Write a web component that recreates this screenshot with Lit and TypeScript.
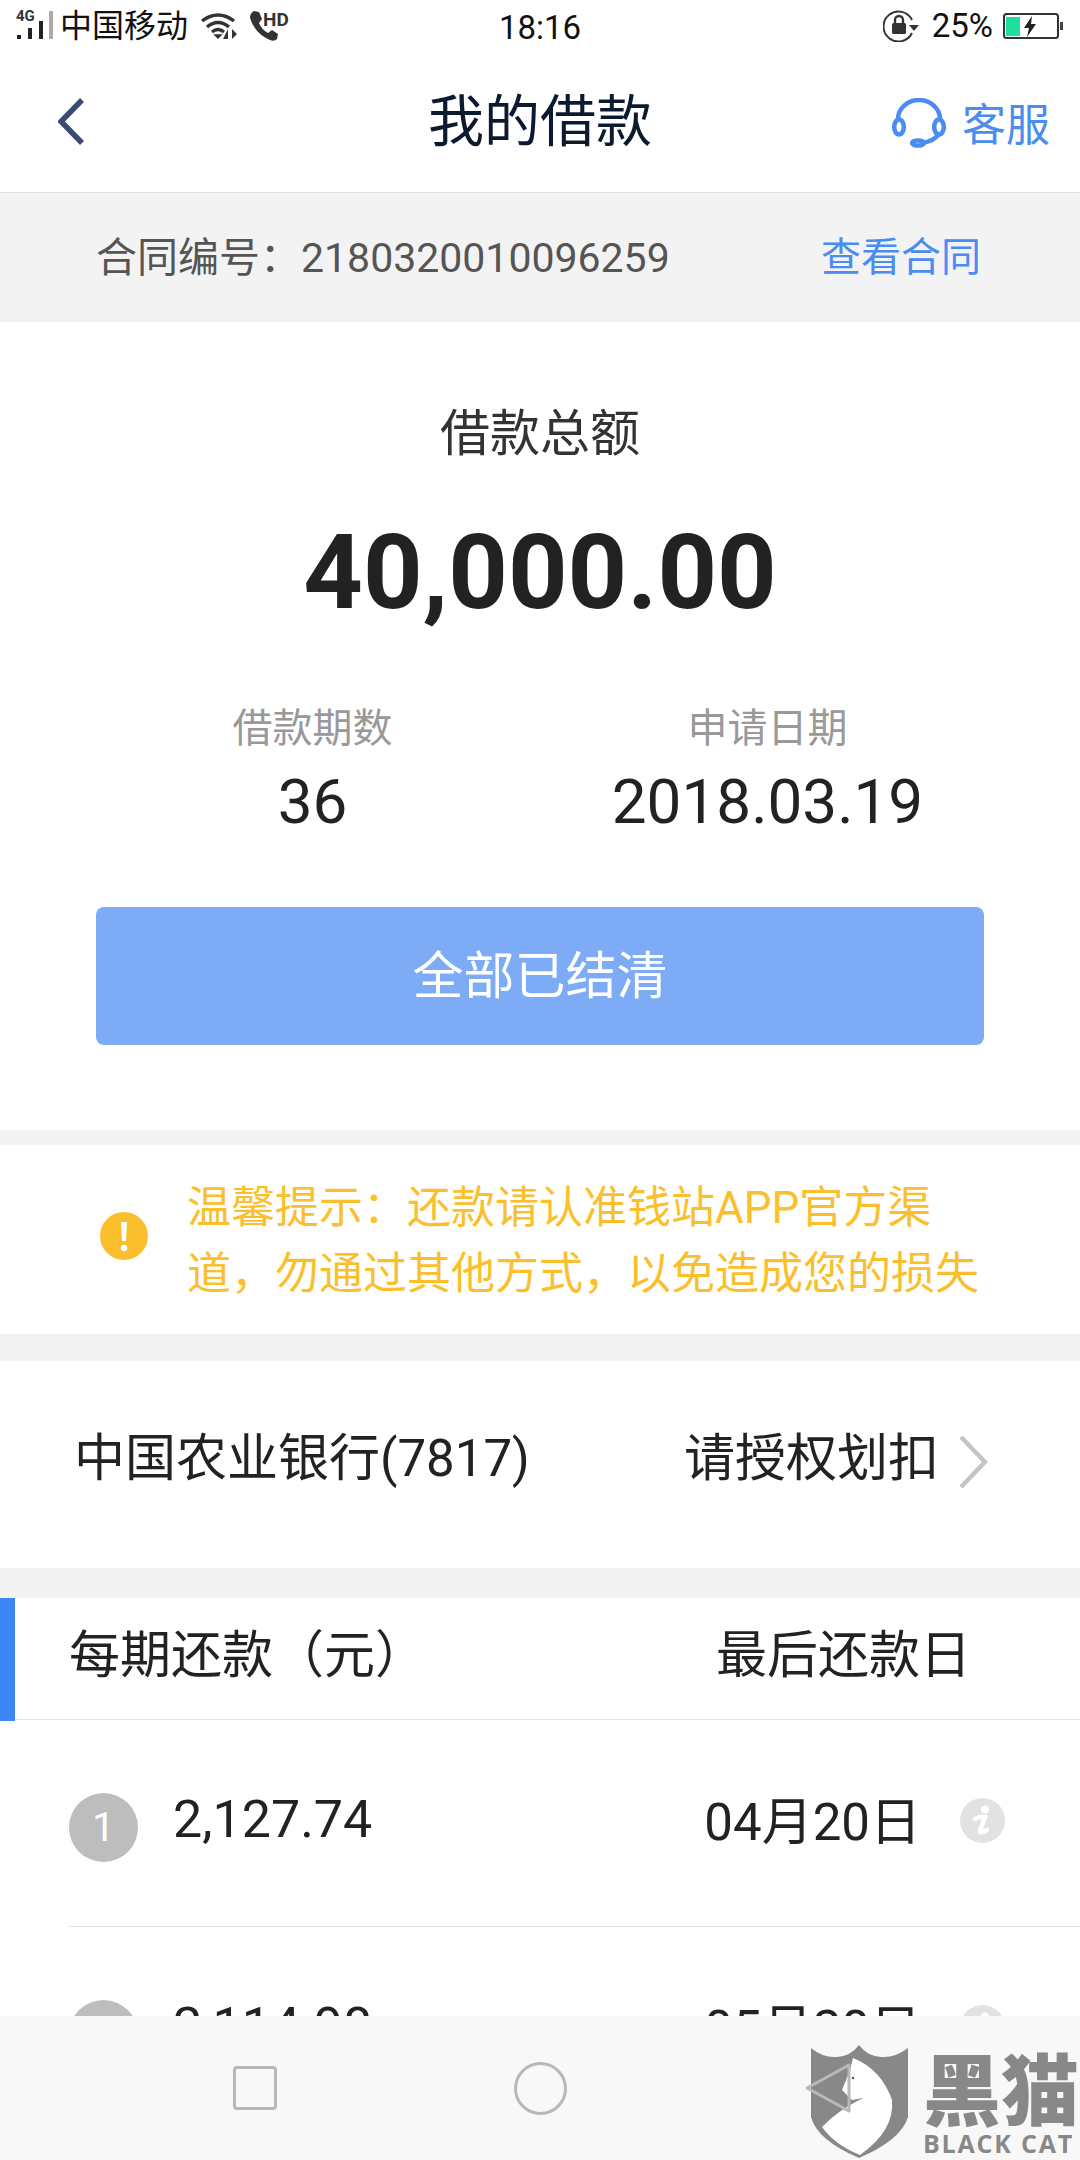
import { LitElement, html, css } from 'lit';
import { customElement } from 'lit/decorators.js';

const ROWS = [
  { no: 1, amount: '2,127.74', date: '04月20日' },
  { no: 2, amount: '2,114.98', date: '05月20日' },
];

@customElement('app-root')
export class AppRoot extends LitElement {
  static styles = css`
    :host {
      display: flex;
      flex-direction: column;
      width: 1080px;
      height: 2160px;
      overflow: hidden;
      background: #f3f3f3;
      font-family: Roboto, "Noto Sans CJK SC", sans-serif;
      color: #222;
    }

    /* status bar */
    .status {
      display: flex;
      align-items: center;
      height: 52px;
      flex: none;
      background: #fff;
      padding: 0 16px;
      color: #111;
      position: relative;
    }
    .signal { width: 40px; height: 40px; flex: none; display: block; }
    .carrier { font-size: 32px; margin-left: 4px; line-height: 40px; }
    .wifi { width: 38px; height: 28px; margin-left: 13px; flex: none; }
    .call { width: 42px; height: 40px; margin-left: 10px; flex: none; }
    .clock {
      position: absolute;
      left: 0;
      right: 0;
      top: 8px;
      text-align: center;
      font-size: 33px;
      line-height: 40px;
    }
    .status-right { display: flex; align-items: center; margin-left: auto; }
    .lock { width: 37px; height: 32px; flex: none; }
    .pct { font-size: 33px; margin-left: 12px; line-height: 40px; }
    .batt { width: 61px; height: 26px; margin-left: 10px; flex: none; }

    /* title bar */
    .header {
      display: flex;
      align-items: center;
      position: relative;
      height: 140px;
      flex: none;
      background: #fff;
      border-bottom: 1px solid #e0e0e0;
      padding: 0 30px 0 58px;
    }
    .back { width: 26px; height: 48px; flex: none; }
    .title {
      position: absolute;
      left: 0;
      right: 0;
      text-align: center;
      font-size: 56px;
      color: #0c1a30;
      line-height: 70px;
    }
    .service {
      display: flex;
      align-items: center;
      margin-left: auto;
      gap: 16px;
      color: #4a8cf0;
      font-size: 44px;
    }
    .headset { width: 54px; height: 50px; flex: none; margin-top: 2px; }

    /* contract line */
    .contract {
      display: flex;
      align-items: center;
      justify-content: space-between;
      box-sizing: border-box;
      height: 129px;
      flex: none;
      padding: 0 99px 8px 96px;
      font-size: 41px;
      color: #555;
    }
    .contract a { color: #4a8cf0; font-size: 40px; }

    /* summary */
    .summary {
      display: flex;
      flex-direction: column;
      align-items: center;
      flex: none;
      background: #fff;
      padding: 77px 96px 85px;
      margin-bottom: 15px;
    }
    .total-label { font-size: 50px; line-height: 70px; color: #333; }
    .total {
      font-size: 104px;
      font-weight: 700;
      line-height: 120px;
      margin-top: 44px;
      color: #222;
    }
    .meta {
      display: grid;
      grid-template-columns: 434px 476px;
      width: 100%;
      margin-top: 71px;
      margin-left: -1px;
      text-align: center;
    }
    .meta-label { font-size: 40px; line-height: 50px; color: #999; }
    .meta-value { font-size: 62px; line-height: 70px; margin-top: 13px; color: #222; }
    .settled {
      display: flex;
      align-items: center;
      justify-content: center;
      box-sizing: border-box;
      width: 888px;
      height: 138px;
      margin-top: 70px;
      padding-bottom: 8px;
      border-radius: 8px;
      background: #7eabf6;
      color: #fff;
      font-size: 51px;
    }

    /* notice */
    .notice {
      display: flex;
      align-items: center;
      gap: 39px;
      height: 189px;
      flex: none;
      background: #fff;
      padding-left: 100px;
      margin-bottom: 27px;
      color: #fbbf2d;
      font-size: 44px;
      line-height: 66px;
    }
    .notice-icon { width: 48px; height: 48px; flex: none; margin-top: -8px; }
    .notice-text { margin-top: 3px; }
    .notice-text span { display: block; white-space: nowrap; }

    /* bank */
    .bank {
      display: flex;
      align-items: center;
      height: 207px;
      flex: none;
      background: #fff;
      padding: 0 92px 0 74px;
      margin-bottom: 30px;
      font-size: 51px;
    }
    .bank span { margin-bottom: 22px; }
    .bank .bank-action { margin-left: auto; }
    .chevron { width: 30px; height: 52px; margin-left: 19px; margin-bottom: 5px; flex: none; }

    /* schedule */
    .schedule { flex: 1; min-height: 0; overflow: hidden; background: #fff; }
    .schedule-head {
      display: flex;
      align-items: center;
      height: 121px;
      border-bottom: 1px solid #e4e4e4;
      font-size: 51px;
      padding-right: 109px;
    }
    .schedule-head span { margin-bottom: 16px; }
    .tab { align-self: stretch; width: 15px; flex: none; background: #3f86f5; margin-bottom: -2px; }
    .schedule-head .head-amount { margin-left: 54px; }
    .schedule-head .head-date { margin-left: auto; }
    .row {
      display: flex;
      align-items: center;
      height: 206px;
      margin-left: 69px;
      padding-right: 75px;
      border-bottom: 1px solid #e4e4e4;
    }
    .no {
      display: flex;
      align-items: center;
      justify-content: center;
      width: 69px;
      height: 69px;
      flex: none;
      margin-top: 8px;
      border-radius: 50%;
      background: #bdbdbd;
      color: #fff;
      font-size: 40px;
    }
    .amount { font-size: 52px; margin-left: 35px; margin-top: -8px; }
    .date { font-size: 51px; margin-left: auto; margin-bottom: 10px; }
    .info { width: 45px; height: 45px; margin-left: 39px; margin-top: -5px; flex: none; }

    /* navigation bar */
    .nav {
      display: flex;
      align-items: center;
      justify-content: space-between;
      position: relative;
      height: 144px;
      flex: none;
      background: #f8f8f8;
      padding: 0 228px 0 233px;
    }
    .nav-square { width: 44px; height: 44px; flex: none; box-sizing: border-box; border: 3px solid #b8b8b8; border-radius: 4px; }
    .nav-circle { width: 53px; height: 53px; flex: none; box-sizing: border-box; border: 3px solid #b8b8b8; border-radius: 50%; }
    .nav-back { width: 48px; height: 52px; flex: none; position: relative; z-index: 1; }

    /* watermark */
    .mark {
      position: absolute;
      left: 811px;
      top: 29px;
      display: flex;
      color: #888;
    }
    .shield { width: 97px; height: 113px; flex: none; }
    .mark-text { display: flex; flex-direction: column; margin-left: 15px; width: 154px; }
    .mark-cn { font-size: 78px; line-height: 78px; font-weight: 900; margin-top: 10px; white-space: nowrap; }
    .mark-en {
      font-family: "Open Sans", sans-serif;
      font-size: 25px;
      line-height: 24px;
      font-weight: 700;
      letter-spacing: 1.8px;
      margin-top: -2px;
      white-space: nowrap;
    }
  `;

  private statusBar() {
    return html`
      <div class="status">
        <svg class="signal" viewBox="0 -4 40 40">
          <text x="0" y="11" font-size="15" font-weight="700" font-family="Roboto" fill="#333">4G</text>
          <rect x="1" y="25" width="4" height="4" fill="#222"></rect>
          <rect x="12" y="18" width="4" height="11" fill="#222"></rect>
          <rect x="23" y="11" width="4" height="18" fill="#222"></rect>
          <rect x="33" y="1" width="4" height="28" fill="#aaa"></rect>
        </svg>
        <span class="carrier">中国移动</span>
        <svg class="wifi" viewBox="0 0 38 28" fill="none" stroke="#333" stroke-width="3.4">
          <path d="M1 9 Q17 -3 33 9"></path>
          <path d="M6 15 Q17 6 28 15"></path>
          <path d="M11 20 Q17 15 23 20"></path>
          <path d="M14 23 L17 26 L20 23 Z" fill="#333" stroke-width="1.5"></path>
          <path d="M27 27 V17 L22 27 Z M31 17 V27 L36 22 Z" fill="#333" stroke="none"></path>
        </svg>
        <svg class="call" viewBox="0 -4 42 40">
          <path d="M5 1 L10 2 L13 9 L10 13 Q13 20 19 23 L23 20 L29 24 L28 29 Q25 32 21 30 Q6 24 1 8 Q1 3 5 1 Z" fill="#333"></path>
          <text x="14" y="16" font-size="19" font-weight="700" font-family="Roboto" fill="#333">HD</text>
        </svg>
        <span class="clock">18:16</span>
        <div class="status-right">
          <svg class="lock" viewBox="0 0 37 32" fill="none">
            <path d="M29 10 A15 15 0 1 0 29 23" stroke="#333" stroke-width="2"></path>
            <path d="M26 15 H36 L31 21 Z" fill="#333"></path>
            <rect x="9" y="13" width="14" height="11" rx="1.5" fill="#333"></rect>
            <path d="M12 13 V10 A4 4 0 0 1 20 10 V13" stroke="#333" stroke-width="2.4"></path>
          </svg>
          <span class="pct">25%</span>
          <svg class="batt" viewBox="0 0 61 26">
            <rect x="1" y="1" width="54" height="24" rx="2.5" fill="none" stroke="#333" stroke-width="2"></rect>
            <rect x="3" y="4" width="14" height="19" fill="#1fdf9f"></rect>
            <rect x="57" y="9" width="3" height="8" fill="#444"></rect>
            <path d="M29 3 L21 15 H26 L24 24 L33 11 H28 Z" fill="#222"></path>
          </svg>
        </div>
      </div>
    `;
  }

  private navBar() {
    return html`
      <div class="nav">
        <div class="nav-square"></div>
        <div class="nav-circle"></div>
        <div class="mark">
          <svg class="shield" viewBox="0 0 97 113">
            <path d="M0 3 Q12 13 26 12 Q40 11 48 0 Q56 11 70 12 Q84 13 97 3 V72 Q90 95 48 113 Q6 95 0 72 Z" fill="#888"></path>
            <path d="M42 13 Q70 24 81 55 Q84 85 49 110 Q24 100 11 82 Q26 66 52 53 L41 55 L31 45 L39 25 Z" fill="#fff"></path>
            <circle cx="42" cy="33" r="1.2" fill="#555"></circle>
          </svg>
          <div class="mark-text">
            <span class="mark-cn">黑猫</span>
            <span class="mark-en">BLACK CAT</span>
          </div>
        </div>
        <svg class="nav-back" viewBox="0 0 48 52" fill="none" stroke="#b8b8b8" stroke-width="3" stroke-linejoin="round">
          <path d="M45 3 L3 26 L45 49 Z"></path>
        </svg>
      </div>
    `;
  }

  render() {
    return html`
      ${this.statusBar()}
      <div class="header">
        <svg class="back" viewBox="0 0 26 48" fill="none" stroke="#3b4a73" stroke-width="5.5">
          <path d="M24 2 L3 23.5 L24 45"></path>
        </svg>
        <span class="title">我的借款</span>
        <div class="service">
          <svg class="headset" viewBox="0 0 54 50" fill="none" stroke="#4a8cf0" stroke-width="4.5" stroke-linecap="round">
            <path d="M6 21 A21 19 0 0 1 48 21"></path>
            <ellipse cx="7" cy="29" rx="4.8" ry="7.5"></ellipse>
            <ellipse cx="47" cy="29" rx="4.8" ry="7.5"></ellipse>
            <path d="M46 37 Q42 43 30 45"></path>
            <ellipse cx="26" cy="45" rx="6" ry="2.6"></ellipse>
          </svg>
          <span>客服</span>
        </div>
      </div>

      <div class="contract">
        <span>合同编号&#xFF1A;2180320010096259</span>
        <a>查看合同</a>
      </div>

      <div class="summary">
        <span class="total-label">借款总额</span>
        <span class="total">40,000.00</span>
        <div class="meta">
          <div>
            <div class="meta-label">借款期数</div>
            <div class="meta-value">36</div>
          </div>
          <div>
            <div class="meta-label">申请日期</div>
            <div class="meta-value">2018.03.19</div>
          </div>
        </div>
        <div class="settled">全部已结清</div>
      </div>

      <div class="notice">
        <svg class="notice-icon" viewBox="0 0 48 48">
          <circle cx="24" cy="24" r="24" fill="#fbbf2d"></circle>
          <path d="M21 10 H27 L26 29 H22 Z" fill="#fff"></path>
          <circle cx="24" cy="36" r="3.2" fill="#fff"></circle>
        </svg>
        <div class="notice-text">
          <span>温馨提示&#xFF1A;还款请认准钱站APP官方渠</span>
          <span>道&#xFF0C;勿通过其他方式&#xFF0C;以免造成您的损失</span>
        </div>
      </div>

      <div class="bank">
        <span>中国农业银行(7817)</span>
        <span class="bank-action">请授权划扣</span>
        <svg class="chevron" viewBox="0 0 30 52" fill="none" stroke="#c4c4c4" stroke-width="4.5">
          <path d="M3 1 L27 26 L3 51"></path>
        </svg>
      </div>

      <div class="schedule">
        <div class="schedule-head">
          <div class="tab"></div>
          <span class="head-amount">每期还款&#xFF08;元&#xFF09;</span>
          <span class="head-date">最后还款日</span>
        </div>
        ${ROWS.map(
          (r) => html`
            <div class="row">
              <div class="no">${r.no}</div>
              <span class="amount">${r.amount}</span>
              <span class="date">${r.date}</span>
              <svg class="info" viewBox="0 0 45 45">
                <circle cx="22.5" cy="22.5" r="22.5" fill="#e2e2e2"></circle>
                <circle cx="25" cy="11.5" r="4" fill="#fff"></circle>
                <path d="M15 21 Q20 18 25 19 L20 33 Q20 36 27 32" fill="none" stroke="#fff" stroke-width="4.6" stroke-linecap="round"></path>
              </svg>
            </div>
          `
        )}
      </div>

      ${this.navBar()}
    `;
  }
}
